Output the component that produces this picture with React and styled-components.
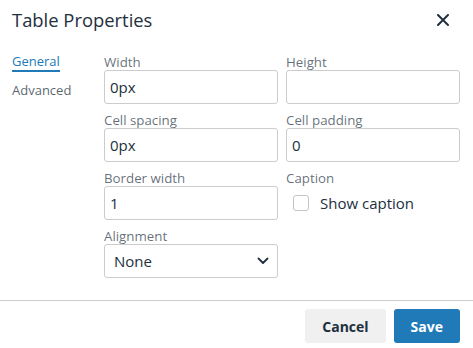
import styled, { createGlobalStyle } from "styled-components";

const GlobalStyle = createGlobalStyle`
  * { box-sizing: border-box; }
  body {
    margin: 0;
    background: #fff;
    font-family: "Open Sans", "Noto Sans", sans-serif;
    color: #222f3e;
  }
`;

const Dialog = styled.div`
  width: 473px;
  height: 348px;
  display: flex;
  flex-direction: column;
  background: #fff;
`;

const Header = styled.div`
  height: 40px;
  padding: 0 12px;
  display: flex;
  align-items: center;
  justify-content: space-between;
`;

const Title = styled.h1`
  margin: 0;
  font-size: 18.4px;
  font-weight: 400;
  line-height: 26px;
  color: #222f3e;
`;

const CloseButton = styled.button`
  border: 0;
  background: none;
  padding: 0;
  width: 24px;
  height: 24px;
  margin-right: 6px;
  display: flex;
  align-items: center;
  justify-content: center;
  color: #222f3e;
`;

const Body = styled.div`
  flex: 1;
  display: flex;
  padding: 14px 13px 0 12px;
`;

const TabList = styled.div`
  width: 92px;
  margin-top: -1px;
  display: flex;
  flex-direction: column;
  gap: 10px;
`;

const Tab = styled.div`
  align-self: flex-start;
  font-size: 13px;
  line-height: 16px;
  padding-bottom: 1px;
  color: ${(p) => (p.active ? "#207ab7" : "rgba(34,47,62,0.75)")};
  border-bottom: 2px solid ${(p) => (p.active ? "#207ab7" : "transparent")};
`;

const Fields = styled.div`
  flex: 1;
  display: grid;
  grid-template-columns: 1fr 1fr;
  column-gap: 8px;
  row-gap: 8px;
  align-content: start;
`;

const Field = styled.div`
  display: flex;
  flex-direction: column;
`;

const Label = styled.label`
  font-size: 13.3px;
  line-height: 16px;
  height: 16px;
  color: rgba(34, 47, 62, 0.7);
`;

const Input = styled.input`
  height: 34px;
  width: 100%;
  border: 1px solid #cccccc;
  border-radius: 3px;
  padding: 0 5px;
  font-family: inherit;
  font-size: 15px;
  color: #222f3e;
  outline: none;
`;

const SelectBox = styled.div`
  height: 34px;
  border: 1px solid #cccccc;
  border-radius: 3px;
  padding: 0 8px 0 9px;
  display: flex;
  align-items: center;
  justify-content: space-between;
  font-size: 15px;
  color: #222f3e;
`;

const CheckRow = styled.div`
  height: 34px;
  display: flex;
  align-items: center;
  gap: 11px;
  padding-left: 7px;
  font-size: 15px;
  color: #222f3e;
`;

const Checkbox = styled.span`
  width: 16px;
  height: 16px;
  border: 1px solid #c5c5c5;
  border-radius: 3px;
  background: #fff;
`;

const Footer = styled.div`
  border-top: 1px solid #cccccc;
  padding: 8px 13px 5px 12px;
  display: flex;
  justify-content: flex-end;
  gap: 8px;
`;

const Button = styled.button`
  height: 34px;
  padding: 0 17px;
  border: 0;
  border-radius: 3px;
  font-family: inherit;
  font-weight: 700;
  font-size: 14px;
  background: ${(p) => (p.primary ? "#207ab7" : "#f0f0f0")};
  color: ${(p) => (p.primary ? "#fff" : "#222f3e")};
`;

function Chevron() {
  return (
    <svg width="12" height="8" viewBox="0 0 12 8">
      <path
        d="M1.5 1.5 L6 6 L10.5 1.5"
        fill="none"
        stroke="#222f3e"
        strokeWidth="1.8"
        strokeLinecap="round"
        strokeLinejoin="round"
      />
    </svg>
  );
}

function CloseIcon() {
  return (
    <svg width="12" height="12" viewBox="0 0 12 12">
      <path
        d="M1 1 L11 11 M11 1 L1 11"
        stroke="#222f3e"
        strokeWidth="2"
        strokeLinecap="round"
      />
    </svg>
  );
}

export default function App() {
  return (
    <Dialog>
      <GlobalStyle />
      <Header>
        <Title>Table Properties</Title>
        <CloseButton>
          <CloseIcon />
        </CloseButton>
      </Header>
      <Body>
        <TabList>
          <Tab active>General</Tab>
          <Tab>Advanced</Tab>
        </TabList>
        <Fields>
          <Field>
            <Label>Width</Label>
            <Input defaultValue="0px" />
          </Field>
          <Field>
            <Label>Height</Label>
            <Input defaultValue="" />
          </Field>
          <Field>
            <Label>Cell spacing</Label>
            <Input defaultValue="0px" />
          </Field>
          <Field>
            <Label>Cell padding</Label>
            <Input defaultValue="0" />
          </Field>
          <Field>
            <Label>Border width</Label>
            <Input defaultValue="1" />
          </Field>
          <Field>
            <Label>Caption</Label>
            <CheckRow>
              <Checkbox />
              Show caption
            </CheckRow>
          </Field>
          <Field>
            <Label>Alignment</Label>
            <SelectBox>
              None
              <Chevron />
            </SelectBox>
          </Field>
        </Fields>
      </Body>
      <Footer>
        <Button>Cancel</Button>
        <Button primary>Save</Button>
      </Footer>
    </Dialog>
  );
}
